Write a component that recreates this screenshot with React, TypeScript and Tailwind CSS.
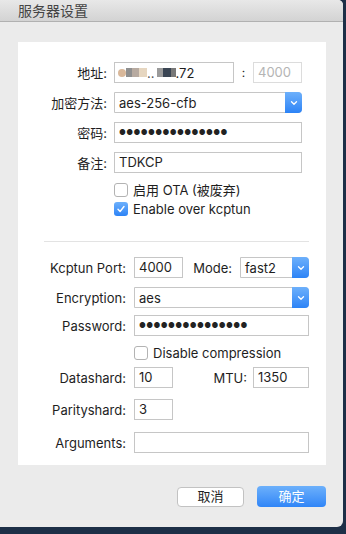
import React from 'react';

const font = { fontFamily: '"Inter", "Noto Sans CJK SC", sans-serif' };

const Chevron = () => (
  <svg width="8" height="6" viewBox="0 0 8 6" fill="none">
    <path d="M1.5 1.8 L4 4.2 L6.5 1.8" stroke="white" strokeWidth="1.3" strokeLinecap="round" strokeLinejoin="round" />
  </svg>
);

const Input = ({ value, w, dots, disabled }: { value?: string; w: string; dots?: boolean; disabled?: boolean }) => (
  <div
    className={`${w} h-[21px] bg-white border flex items-center pl-[4px] text-[13px] leading-none ${
      disabled ? 'border-[#dcdcdc] text-[#b4b4b4]' : 'border-[#c6c6c6] text-[#1e1e1e]'
    }`}
  >
    {dots ? <span className="text-[7.5px] tracking-[0.4px] text-[#222] mt-[1px]">●●●●●●●●●●●●●●●</span> : value}
  </div>
);

const Select = ({ value, w }: { value: string; w: string }) => (
  <div className={`${w} h-[21px] flex border border-[#c6c6c6] bg-white rounded-r-[4px]`}>
    <div className="flex-1 flex items-center pl-[4px] text-[13px] text-[#1e1e1e]">{value}</div>
    <div className="w-[17px] -my-[1px] -mr-[1px] rounded-r-[4px] bg-gradient-to-b from-[#6db0fb] to-[#2b83f6] flex items-center justify-center">
      <Chevron />
    </div>
  </div>
);

const Check = ({ checked, label }: { checked?: boolean; label: string }) => (
  <div className="h-[14px] flex items-center gap-[5px] text-[13px] text-[#1e1e1e]">
    {checked ? (
      <div className="w-[14px] h-[14px] rounded-[3px] bg-gradient-to-b from-[#6db0fb] to-[#2b83f6] flex items-center justify-center">
        <svg width="10" height="10" viewBox="0 0 10 10" fill="none">
          <path d="M2 5.3 L4.1 7.5 L8 2.5" stroke="white" strokeWidth="1.4" strokeLinecap="round" strokeLinejoin="round" />
        </svg>
      </div>
    ) : (
      <div className="w-[14px] h-[14px] rounded-[3px] border border-[#b3b3b3] bg-white" />
    )}
    <span>{label}</span>
  </div>
);

export default function App() {
  return (
    <div className="w-[346px] h-[534px] bg-[#1d2f47] overflow-hidden" style={font}>
      <div className="w-[343px] h-[527px] bg-[#ebebeb] rounded-tr-[5px] rounded-br-[6px] flex flex-col overflow-hidden">
        {/* Title bar */}
        <div className="h-[22px] bg-gradient-to-b from-[#e8e8e8] to-[#d3d3d3] border-b border-[#b1b1b1] flex items-center pl-[18px] text-[14px] text-[#444]">
          服务器设置
        </div>

        {/* Panel */}
        <div className="ml-[18px] mt-[20px] w-[308px] h-[423px] bg-white flex flex-col pt-[20px] text-[13px] leading-[16px] text-[#1e1e1e]">
          {/* Top section */}
          <div className="flex flex-col gap-[9px]">
            <div className="h-[21px] flex items-center">
              <div className="w-[89px] text-right">地址:</div>
              <div className="ml-[7px] w-[120px] h-[21px] bg-white border border-[#c6c6c6] flex items-center pl-[3px] text-[13px]">
                <span className="flex items-center blur-[0.6px]">
                  <span className="w-[8px] h-[8px] rounded-full bg-[#d9b89a]" />
                  <span className="w-[6px] h-[9px] bg-[#8f8f8f]" />
                  <span className="w-[7px] h-[9px] bg-[#b7aaa0]" />
                  <span className="w-[8px] h-[9px] bg-[#e6d6c0]" />
                </span>
                <span className="text-[#555]">..</span>
                <span className="flex items-center blur-[0.6px] ml-[2px]">
                  <span className="w-[6px] h-[9px] bg-[#9a9a9a]" />
                  <span className="w-[8px] h-[9px] bg-[#3a4553]" />
                  <span className="w-[5px] h-[9px] bg-[#777]" />
                </span>
                <span>.72</span>
              </div>
              <div className="w-[19px] text-center text-[12px]">:</div>
              <Input value="4000" w="w-[49px]" disabled />
            </div>
            <div className="h-[21px] flex items-center">
              <div className="w-[89px] text-right">加密方法:</div>
              <div className="ml-[7px]">
                <Select value="aes-256-cfb" w="w-[188px]" />
              </div>
            </div>
            <div className="h-[21px] flex items-center">
              <div className="w-[89px] text-right">密码:</div>
              <div className="ml-[7px]">
                <Input dots w="w-[188px]" />
              </div>
            </div>
            <div className="h-[21px] flex items-center">
              <div className="w-[89px] text-right">备注:</div>
              <div className="ml-[7px]">
                <Input value="TDKCP" w="w-[188px]" />
              </div>
            </div>
          </div>

          <div className="ml-[96px] mt-[10px] flex flex-col gap-[5px]">
            <Check label="启用 OTA (被废弃)" />
            <Check checked label="Enable over kcptun" />
          </div>

          <div className="ml-[26px] mr-[17px] mt-[25px] h-px bg-[#e3e3e3]" />

          {/* Kcptun section */}
          <div className="mt-[15px] flex flex-col">
            <div className="h-[21px] flex items-center">
              <div className="w-[108px] text-right">Kcptun Port:</div>
              <div className="ml-[8px]">
                <Input value="4000" w="w-[49px]" />
              </div>
              <div className="w-[57px] text-right pr-[8px]">Mode:</div>
              <Select value="fast2" w="w-[69px]" />
            </div>
            <div className="h-[21px] flex items-center mt-[9px]">
              <div className="w-[108px] text-right">Encryption:</div>
              <div className="ml-[8px]">
                <Select value="aes" w="w-[175px]" />
              </div>
            </div>
            <div className="h-[21px] flex items-center mt-[7px]">
              <div className="w-[108px] text-right">Password:</div>
              <div className="ml-[8px]">
                <Input dots w="w-[175px]" />
              </div>
            </div>
            <div className="ml-[116px] mt-[10px]">
              <Check label="Disable compression" />
            </div>
            <div className="h-[21px] flex items-center mt-[7px]">
              <div className="w-[108px] text-right">Datashard:</div>
              <div className="ml-[8px]">
                <Input value="10" w="w-[39px]" />
              </div>
              <div className="w-[80px] text-right pr-[6px]">MTU:</div>
              <Input value="1350" w="w-[56px]" />
            </div>
            <div className="h-[21px] flex items-center mt-[11px]">
              <div className="w-[108px] text-right">Parityshard:</div>
              <div className="ml-[8px]">
                <Input value="3" w="w-[39px]" />
              </div>
            </div>
            <div className="h-[21px] flex items-center mt-[12px]">
              <div className="w-[108px] text-right">Arguments:</div>
              <div className="ml-[8px]">
                <Input w="w-[175px]" />
              </div>
            </div>
          </div>
        </div>

        {/* Footer buttons */}
        <div className="flex justify-end items-center gap-[13px] pr-[17px] mt-[21px]">
          <button className="w-[67px] h-[20px] bg-white border border-[#c2c2c2] rounded-[4px] text-[13px] text-[#1e1e1e] flex items-center justify-center">
            取消
          </button>
          <button className="w-[69px] h-[21px] rounded-[4px] bg-gradient-to-b from-[#6cb0fb] to-[#2f85f7] text-[13px] text-white flex items-center justify-center">
            确定
          </button>
        </div>
      </div>
    </div>
  );
}
